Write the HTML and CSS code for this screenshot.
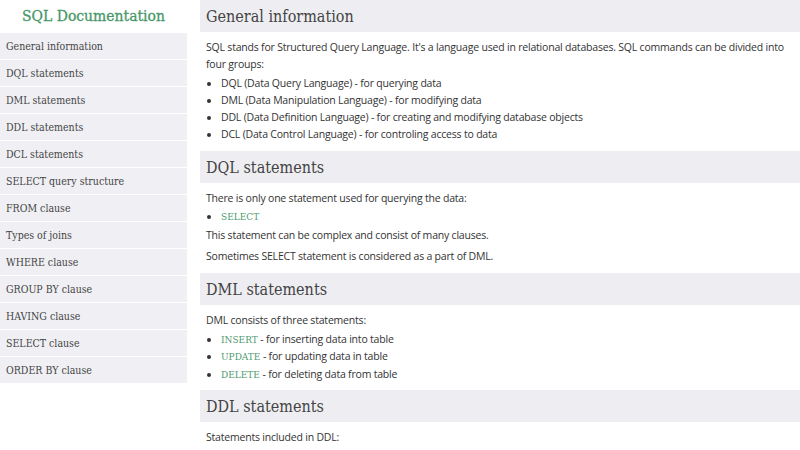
FILE: index.html
```html
<!DOCTYPE html>
<html>
<head>
<meta charset="utf-8">
<link rel="stylesheet" href="styles.css">
</head>
<body>
<div class="page">
  <nav class="sidebar">
    <header class="title">SQL Documentation</header>
    <a class="nav-link" href="#">General information</a>
    <a class="nav-link" href="#">DQL statements</a>
    <a class="nav-link" href="#">DML statements</a>
    <a class="nav-link" href="#">DDL statements</a>
    <a class="nav-link" href="#">DCL statements</a>
    <a class="nav-link" href="#">SELECT query structure</a>
    <a class="nav-link" href="#">FROM clause</a>
    <a class="nav-link" href="#">Types of joins</a>
    <a class="nav-link" href="#">WHERE clause</a>
    <a class="nav-link" href="#">GROUP BY clause</a>
    <a class="nav-link" href="#">HAVING clause</a>
    <a class="nav-link" href="#">SELECT clause</a>
    <a class="nav-link" href="#">ORDER BY clause</a>
  </nav>
  <main class="main">
    <section class="section">
      <header class="section-head">General information</header>
      <div class="section-body">
        <p>SQL stands for Structured Query Language. It's a language used in relational databases. SQL commands can be divided into four groups:</p>
        <ul>
          <li>DQL (Data Query Language) - for querying data</li>
          <li>DML (Data Manipulation Language) - for modifying data</li>
          <li>DDL (Data Definition Language) - for creating and modifying database objects</li>
          <li>DCL (Data Control Language) - for controling access to data</li>
        </ul>
      </div>
    </section>
    <section class="section">
      <header class="section-head">DQL statements</header>
      <div class="section-body">
        <p>There is only one statement used for querying the data:</p>
        <ul>
          <li><code>SELECT</code></li>
        </ul>
        <p>This statement can be complex and consist of many clauses.</p>
        <p>Sometimes SELECT statement is considered as a part of DML.</p>
      </div>
    </section>
    <section class="section">
      <header class="section-head">DML statements</header>
      <div class="section-body">
        <p>DML consists of three statements:</p>
        <ul>
          <li><code>INSERT</code> - for inserting data into table</li>
          <li><code>UPDATE</code> - for updating data in table</li>
          <li><code>DELETE</code> - for deleting data from table</li>
        </ul>
      </div>
    </section>
    <section class="section">
      <header class="section-head">DDL statements</header>
      <div class="section-body">
        <p>Statements included in DDL:</p>
      </div>
    </section>
  </main>
</div>
</body>
</html>
```
FILE: styles.css
```css
html, body {
  margin: 0;
  padding: 0;
  background: #ffffff;
  overflow: hidden;
}
.page {
  display: flex;
  gap: 13px;
  align-items: flex-start;
  font-family: "Open Sans", "Liberation Sans", sans-serif;
  font-size: 10.5px;
  letter-spacing: -0.2px;
  color: #333333;
}
.sidebar {
  width: 187px;
  flex: none;
  display: flex;
  flex-direction: column;
  letter-spacing: 0;
}
.title {
  height: 33px;
  line-height: 33px;
  text-align: center;
  font-family: "DejaVu Serif", serif;
  font-stretch: condensed;
  font-size: 15.5px;
  color: #469868;
  -webkit-text-stroke: 0.3px #469868;
}
.nav-link {
  display: block;
  height: 26px;
  line-height: 26px;
  margin-bottom: 1px;
  padding-left: 6px;
  background: #f0f0f4;
  color: #444444;
  text-decoration: none;
  font-family: "DejaVu Serif", serif;
  font-stretch: condensed;
  font-size: 10.5px;
}
.main {
  flex: 1;
  min-width: 0;
}
.section-head {
  height: 32px;
  line-height: 33px;
  padding-left: 6px;
  background: #eeeef2;
  color: #444444;
  font-family: "DejaVu Serif", serif;
  font-stretch: condensed;
  font-size: 16px;
  letter-spacing: 0;
}
.section-body {
  padding: 7px 16px 5px 6px;
}
.section-body p {
  margin: 0 0 3.5px;
  line-height: 17px;
}
.section-body ul {
  margin: -2px 0 2px;
  padding-left: 15px;
}
.section-body li {
  line-height: 17.3px;
}
code {
  font-family: "DejaVu Serif", serif;
  font-stretch: condensed;
  font-size: 10px;
  letter-spacing: 0;
  color: #4f9a72;
}
```
